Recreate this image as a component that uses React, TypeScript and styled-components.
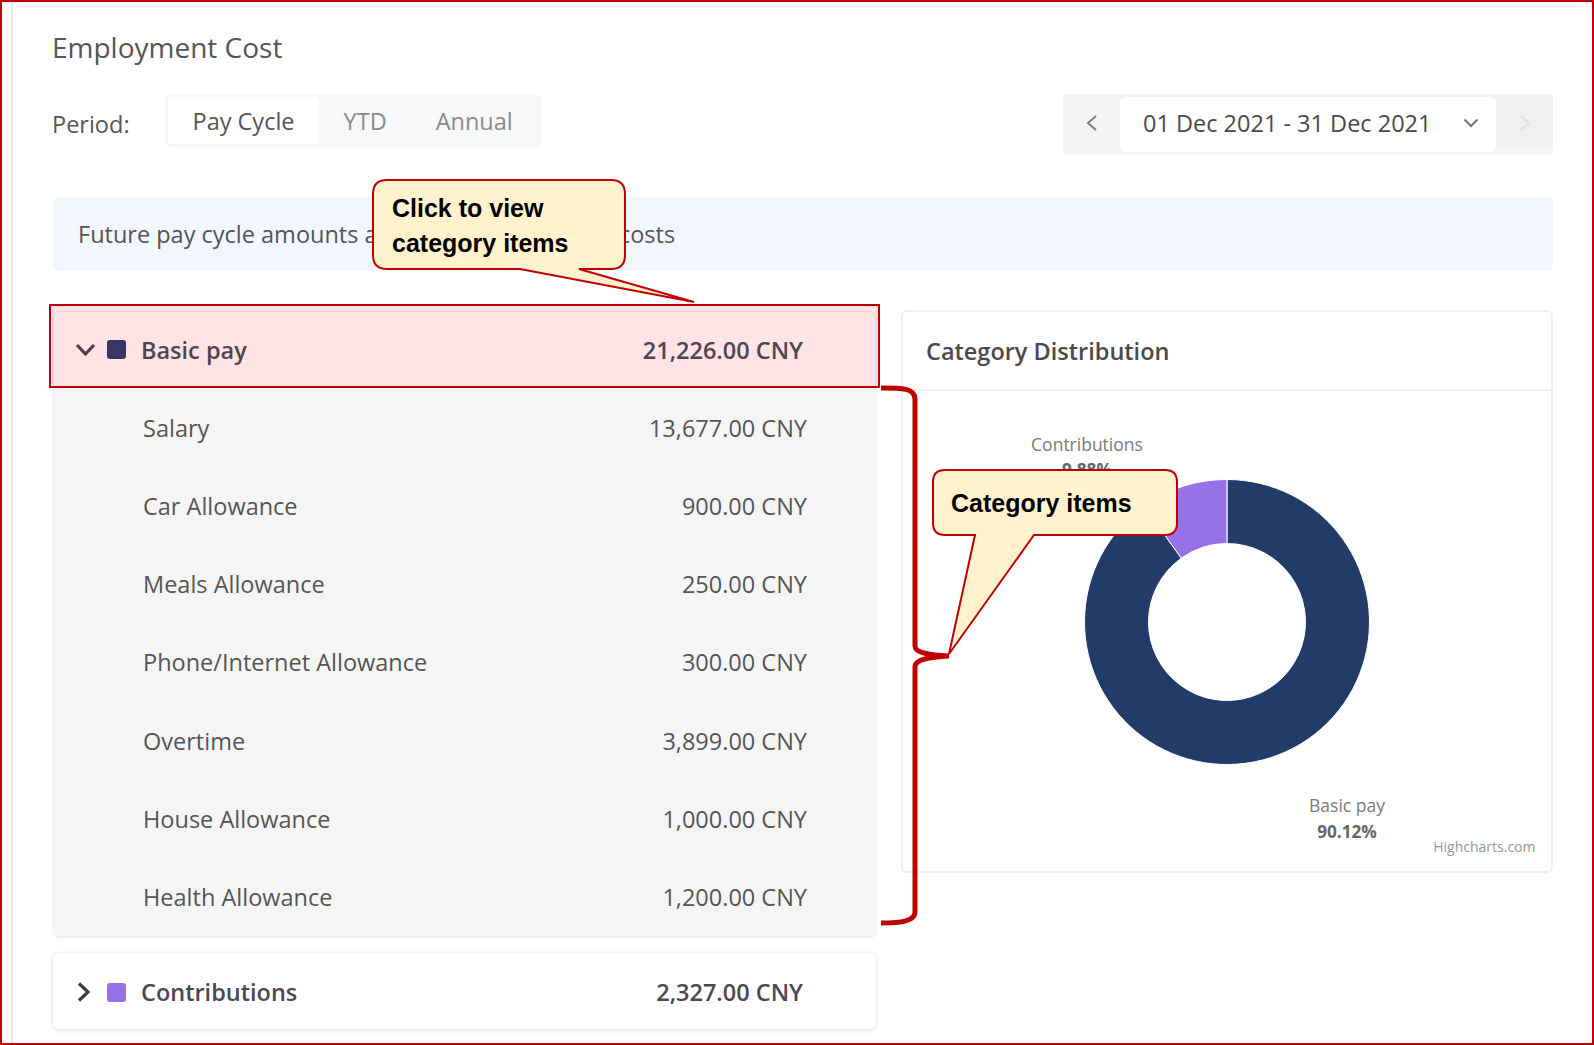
import React from 'react'
import styled, { createGlobalStyle } from 'styled-components'

const GlobalStyle = createGlobalStyle`
    html, body {
        margin : 0;
        padding : 0;
        background : #fff;
    }
    body {
        font-family : "Open Sans", "Noto Sans", sans-serif;
    }
`

const RED = '#c00000'

type Item = { label: string; amount: string }

const items: Item[] = [
    { label: 'Salary', amount: '13,677.00 CNY' },
    { label: 'Car Allowance', amount: '900.00 CNY' },
    { label: 'Meals Allowance', amount: '250.00 CNY' },
    { label: 'Phone/Internet Allowance', amount: '300.00 CNY' },
    { label: 'Overtime', amount: '3,899.00 CNY' },
    { label: 'House Allowance', amount: '1,000.00 CNY' },
    { label: 'Health Allowance', amount: '1,200.00 CNY' },
]

const polar = (cx: number, cy: number, r: number, deg: number) => {
    const a = (deg - 90) * Math.PI / 180
    return `${cx + r * Math.cos(a)} ${cy + r * Math.sin(a)}`
}

const ringSlice = (start: number, end: number) => {
    const cx = 1228, cy = 623, R = 142.5, r = 78.5
    const large = end - start > 180 ? 1 : 0
    return `M ${polar(cx, cy, R, start)} A ${R} ${R} 0 ${large} 1 ${polar(cx, cy, R, end)} L ${polar(cx, cy, r, end)} A ${r} ${r} 0 ${large} 0 ${polar(cx, cy, r, start)} Z`
}

const App: React.FC = () => {
    return (
        <Screen>
            <GlobalStyle />
            <Main>
                <Title>Employment Cost</Title>
                <Toolbar>
                    <PeriodGroup>
                        <PeriodLabel>Period:</PeriodLabel>
                        <Tabs>
                            <Tab $active>Pay Cycle</Tab>
                            <Tab>YTD</Tab>
                            <Tab>Annual</Tab>
                        </Tabs>
                    </PeriodGroup>
                    <DatePicker>
                        <DateArrow>
                            <svg width="12" height="18" viewBox="0 0 12 18"><polyline points="10,2 2,9 10,16" fill="none" stroke="#7d7f8a" strokeWidth="2" /></svg>
                        </DateArrow>
                        <DateBox>
                            <span>01 Dec 2021 - 31 Dec 2021</span>
                            <svg width="16" height="10" viewBox="0 0 16 10"><polyline points="1.5,1.5 8,8 14.5,1.5" fill="none" stroke="#6f7480" strokeWidth="2" /></svg>
                        </DateBox>
                        <DateArrow $disabled>
                            <svg width="12" height="18" viewBox="0 0 12 18"><polyline points="2,2 10,9 2,16" fill="none" stroke="#dfe1e1" strokeWidth="2" /></svg>
                        </DateArrow>
                    </DatePicker>
                </Toolbar>
                <Banner>Future pay cycle amounts are estimated monthly costs</Banner>
                <Split>
                    <Accordion>
                        <ExpandedCard>
                            <HighlightFrame />
                            <CategoryRow $height={77}>
                                <ChevronSlot>
                                    <svg width="21" height="14" viewBox="0 0 21 14"><polyline points="2,2 10.5,11 19,2" fill="none" stroke="#4b3f4b" strokeWidth="3.2" /></svg>
                                </ChevronSlot>
                                <Swatch $color="#3b3563" />
                                <CategoryName>Basic pay</CategoryName>
                                <CategoryAmount>21,226.00 CNY</CategoryAmount>
                            </CategoryRow>
                            <ItemsPanel>
                                {items.map((item) => (
                                    <ItemRow key={item.label}>
                                        <span>{item.label}</span>
                                        <span>{item.amount}</span>
                                    </ItemRow>
                                ))}
                            </ItemsPanel>
                        </ExpandedCard>
                        <CollapsedCard>
                            <CategoryRow $height={76} $shift={2}>
                                <ChevronSlot>
                                    <svg width="21" height="20" viewBox="0 0 21 20"><polyline points="4,1.5 13,10 4,18.5" fill="none" stroke="#3d3d45" strokeWidth="3.2" /></svg>
                                </ChevronSlot>
                                <Swatch $color="#9771e8" />
                                <CategoryName>Contributions</CategoryName>
                                <CategoryAmount>2,327.00 CNY</CategoryAmount>
                            </CategoryRow>
                        </CollapsedCard>
                    </Accordion>
                    <ChartCard>
                        <ChartHeader>Category Distribution</ChartHeader>
                        <svg width="648" height="480" viewBox="904 392 648 480" style={{ display: 'block' }}>
                            <path d={ringSlice(0, 324.4)} fill="#233b69" stroke="#fff" strokeWidth="1" />
                            <path d={ringSlice(324.4, 360)} fill="#9771e8" stroke="#fff" strokeWidth="1" />
                            <ChartLabel x="1088" y="452" textAnchor="middle">Contributions</ChartLabel>
                            <ChartValue x="1088" y="477" textAnchor="middle">9.88%</ChartValue>
                            <ChartLabel x="1348" y="813" textAnchor="middle">Basic pay</ChartLabel>
                            <ChartValue x="1348" y="839" textAnchor="middle">90.12%</ChartValue>
                            <ChartCredit x="1536.5" y="853" textAnchor="end">Highcharts.com</ChartCredit>
                        </svg>
                    </ChartCard>
                </Split>
            </Main>

            <Brace width="1594" height="1045" viewBox="0 0 1594 1045">
                <path d="M 881 388 C 902 388 915 388 915 399 V 646 C 915 653 930 655 949 656 C 930 657 915 659 915 667 V 912 C 915 921 902 923 881 923" fill="none" stroke={RED} strokeWidth="5" />
            </Brace>

            <Callout $top={180} $left={373} $width={252} $height={89} $pad="11px 0 0 19px">
                <CalloutShape width="252" height="89">
                    <path d="M 14 0 H 238 Q 252 0 252 14 V 75 Q 252 89 238 89 H 206 L 321 122 L 147 89 H 14 Q 0 89 0 75 V 14 Q 0 0 14 0 Z" fill="#fff2cc" stroke={RED} strokeWidth="2" />
                </CalloutShape>
                <CalloutText>Click to view<br />category items</CalloutText>
            </Callout>
            <Callout $top={470} $left={933} $width={244} $height={65} $pad="16px 0 0 18px">
                <CalloutShape width="244" height="65">
                    <path d="M 12 0 H 232 Q 244 0 244 12 V 53 Q 244 65 232 65 H 101 L 16 184 L 42 65 H 12 Q 0 65 0 53 V 12 Q 0 0 12 0 Z" fill="#fff2cc" stroke={RED} strokeWidth="2" />
                </CalloutShape>
                <CalloutText>Category items</CalloutText>
            </Callout>
        </Screen>
    )
}

const Screen = styled.div`
    position : relative;
    width : 1594px;
    height : 1045px;
    overflow : hidden;
    background : #fff;
    box-shadow : inset 0 0 0 2px ${RED};
`
const Main = styled.main`
    box-sizing : border-box;
    height : 1041px;
    margin : 2px 0 2px 11px;
    padding : 26px 41px 0 40px;
    border-left : 2px solid #e8e8e8;
    color : #4a4a4a;
`
const Title = styled.h1`
    margin : 0 0 0 -1px;
    height : 40px;
    font-size : 28px;
    line-height : 38px;
    font-weight : 400;
    color : #555;
`
const Toolbar = styled.div`
    display : flex;
    justify-content : space-between;
    align-items : flex-start;
    margin-top : 26px;
`
const PeriodGroup = styled.div`
    display : flex;
    align-items : flex-start;
`
const PeriodLabel = styled.div`
    width : 77px;
    margin : 13px 35px 0 -1px;
    font-size : 23.5px;
    line-height : 34px;
    color : #555;
`
const Tabs = styled.div`
    display : flex;
    height : 47px;
    margin-left : 1px;
    padding : 3px 4px 3px 3px;
    border-radius : 6px;
    background : #f7f8fa;
`
const Tab = styled.div<{ $active?: boolean }>`
    display : flex;
    align-items : center;
    padding : 0 24.5px;
    border-radius : 5px;
    font-size : 23.5px;
    color : ${(p) => (p.$active ? '#555' : '#8a8a8a')};
    background : ${(p) => (p.$active ? '#fff' : 'transparent')};
`
const DatePicker = styled.div`
    display : flex;
    width : 490px;
    height : 61px;
    background : #f4f4f4;
`
const DateArrow = styled.div<{ $disabled?: boolean }>`
    display : flex;
    align-items : center;
    justify-content : center;
    width : 57px;
    height : 53px;
    padding-top : 4px;
    box-sizing : border-box;
    background : ${(p) => (p.$disabled ? '#eff0f0' : 'transparent')};
`
const DateBox = styled.div`
    box-sizing : border-box;
    display : flex;
    align-items : center;
    justify-content : space-between;
    width : 376px;
    height : 55px;
    margin-top : 3px;
    padding : 0 17px 4px 23px;
    border-radius : 6px;
    background : #fff;
    font-size : 23.5px;
    color : #4a4a4a;
`
const Banner = styled.div`
    box-sizing : border-box;
    display : flex;
    align-items : center;
    height : 74px;
    margin-top : 42px;
    padding-left : 25px;
    border-radius : 5px;
    background : #f2f7fd;
    font-size : 23.5px;
    color : #555;
`
const Split = styled.div`
    display : flex;
    align-items : flex-start;
    justify-content : space-between;
    margin-top : 39px;
`
const Accordion = styled.div`
    width : 823px;
    padding-top : 1px;
`
const ExpandedCard = styled.section`
    position : relative;
    border-radius : 6px;
    box-shadow : 0 1px 3px rgba(0, 0, 0, 0.12);
`
const HighlightFrame = styled.div`
    position : absolute;
    top : -7px;
    left : -4px;
    right : -4px;
    height : 80px;
    border : 2px solid ${RED};
    background : #ffe3e5;

    &::after {
        content : '';
        position : absolute;
        top : 5px;
        left : 2px;
        right : 2px;
        bottom : 0;
        border : 1px solid rgba(120, 60, 60, 0.1);
        border-bottom : none;
        border-radius : 6px 6px 0 0;
    }
`
const CollapsedCard = styled.section`
    margin-top : 17px;
    border-radius : 6px;
    background : #fff;
    box-shadow : 0 1px 4px rgba(0, 0, 0, 0.16);
`
const CategoryRow = styled.div<{ $height: number; $shift?: number }>`
    position : relative;
    box-sizing : border-box;
    display : flex;
    align-items : center;
    height : ${(p) => p.$height}px;
    padding : ${(p) => p.$shift || 0}px 73px 0 22px;
    font-size : 23.5px;
    font-weight : 600;
    color : #4e4650;
`
const ChevronSlot = styled.div`
    display : flex;
    width : 21px;
    margin-right : 11px;
`
const Swatch = styled.span<{ $color: string }>`
    width : 19px;
    height : 19px;
    margin-right : 15px;
    border-radius : 3px;
    background : ${(p) => p.$color};
`
const CategoryName = styled.span`
    flex : 1;
`
const CategoryAmount = styled.span``
const ItemsPanel = styled.div`
    display : grid;
    grid-auto-rows : 78.25px;
    box-sizing : border-box;
    height : 548px;
    padding : 0.4px 69px 0 90px;
    border-radius : 0 0 6px 6px;
    background : #f5f5f5;
`
const ItemRow = styled.div`
    display : flex;
    align-items : center;
    justify-content : space-between;
    font-size : 23.5px;
    color : #555;
`
const ChartCard = styled.section`
    width : 652px;
    border : 2px solid #eeeff0;
    border-radius : 6px;
    box-sizing : border-box;
    background : #fff;
`
const ChartHeader = styled.div`
    box-sizing : border-box;
    display : flex;
    align-items : center;
    height : 79px;
    padding-left : 23px;
    border-bottom : 2px solid #eeeff0;
    font-size : 23.5px;
    font-weight : 600;
    color : #4a4a4a;
`
const ChartLabel = styled.text`
    font-size : 17.5px;
    fill : #7a7a7a;
`
const ChartValue = styled.text`
    font-size : 17.2px;
    font-weight : 700;
    fill : #666;
`
const ChartCredit = styled.text`
    font-size : 14px;
    fill : #999;
`
const Brace = styled.svg`
    position : absolute;
    top : 0;
    left : 0;
    pointer-events : none;
`
const Callout = styled.div<{ $top: number; $left: number; $width: number; $height: number; $pad: string }>`
    position : absolute;
    box-sizing : border-box;
    top : ${(p) => p.$top}px;
    left : ${(p) => p.$left}px;
    width : ${(p) => p.$width}px;
    height : ${(p) => p.$height}px;
    padding : ${(p) => p.$pad};
`
const CalloutShape = styled.svg`
    position : absolute;
    top : 0;
    left : 0;
    overflow : visible;
`
const CalloutText = styled.div`
    position : relative;
    font-family : "Liberation Sans", Arial, sans-serif;
    font-size : 25px;
    line-height : 35px;
    font-weight : 700;
    color : #000;
    white-space : nowrap;
`
export default App
